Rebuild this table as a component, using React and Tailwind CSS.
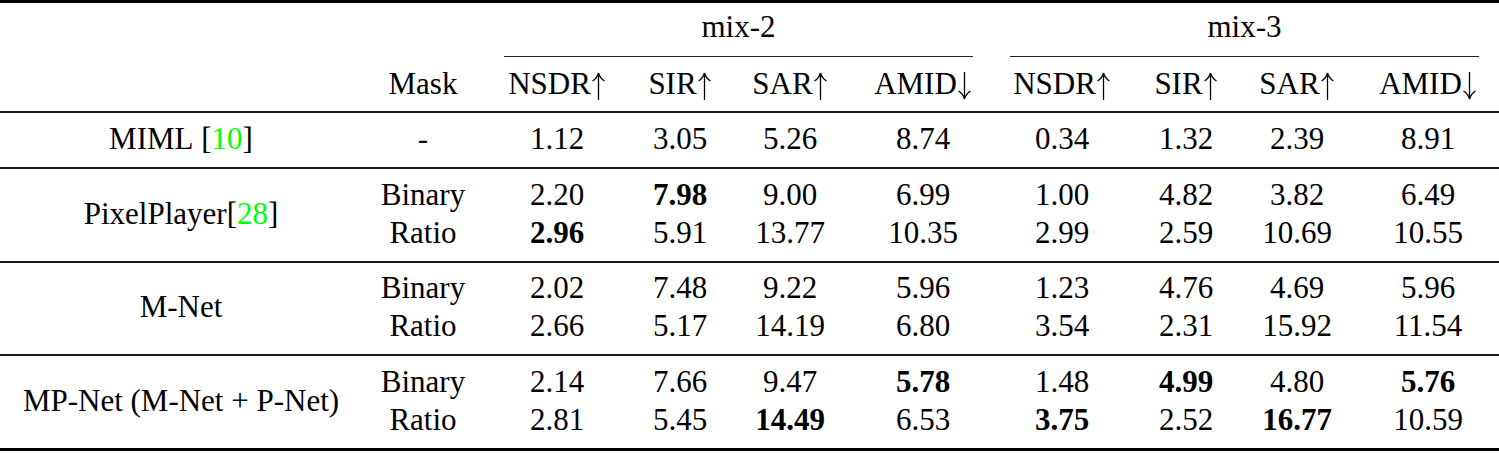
const cols = 'grid grid-cols-[362px_122px_146px_100px_120px_146px_132px_116px_106px_149px]'

const rows = [
  { name: 'MIML', cite: '10', space: true, lines: [['-', '1.12', '3.05', '5.26', '8.74', '0.34', '1.32', '2.39', '8.91']] },
  {
    name: 'PixelPlayer',
    cite: '28',
    lines: [
      ['Binary', '2.20', '*7.98', '9.00', '6.99', '1.00', '4.82', '3.82', '6.49'],
      ['Ratio', '*2.96', '5.91', '13.77', '10.35', '2.99', '2.59', '10.69', '10.55'],
    ],
  },
  {
    name: 'M-Net',
    lines: [
      ['Binary', '2.02', '7.48', '9.22', '5.96', '1.23', '4.76', '4.69', '5.96'],
      ['Ratio', '2.66', '5.17', '14.19', '6.80', '3.54', '2.31', '15.92', '11.54'],
    ],
  },
  {
    name: 'MP-Net (M-Net + P-Net)',
    lines: [
      ['Binary', '2.14', '7.66', '9.47', '*5.78', '1.48', '*4.99', '4.80', '*5.76'],
      ['Ratio', '2.81', '5.45', '*14.49', '6.53', '*3.75', '2.52', '*16.77', '10.59'],
    ],
  },
]

function Cell({ value, last }) {
  const bold = value.startsWith('*')
  return (
    <div className={`text-center ${bold ? 'font-bold' : ''} ${last ? 'pl-[7px]' : ''}`}>
      {bold ? value.slice(1) : value}
    </div>
  )
}

// thin math-style arrow, like \uparrow / \downarrow
function Arrow({ down }) {
  return (
    <svg
      width="15"
      height="28"
      viewBox="0 0 15 28"
      className={`inline-block align-[-6px] ${down ? 'rotate-180' : ''}`}
      fill="none"
      stroke="black"
      strokeWidth="1.3"
    >
      <path d="M7.5 1.5 V28" />
      <path d="M7.5 1 C6.5 4.5 4 7.5 1.5 9" />
      <path d="M7.5 1 C8.5 4.5 11 7.5 13.5 9" />
    </svg>
  )
}

const heads = [
  ['NSDR', false],
  ['SIR', false],
  ['SAR', false],
  ['AMID', true],
]

export default function App() {
  return (
    <div className="w-[1499px] h-[453px] bg-white text-black text-[31px] leading-[38px] font-['Liberation_Serif','Times_New_Roman',serif]">
      <div className="border-t-[3px] border-black">
        {/* header */}
        <div className={`${cols} pt-[4.5px]`}>
          <div className="col-start-3 col-span-4 ml-[20px] mr-[23px] pb-[10.5px] border-b border-[#222] text-center">mix-2</div>
          <div className="col-span-4 ml-[14px] mr-[20px] pb-[10.5px] border-b border-[#222] text-center">mix-3</div>
        </div>
        <div className={`${cols} pt-[7.5px] pb-[8.5px]`}>
          <div />
          <div className="text-center">Mask</div>
          {[...heads, ...heads].map(([h, down], i) => (
            <div key={i} className={`text-center whitespace-nowrap ${i === 7 ? 'pl-[7px]' : ''}`}>
              {h}
              <Arrow down={down} />
            </div>
          ))}
        </div>

        {rows.map((r, ri) => (
          <div
            key={r.name}
            className={`${cols} border-t-2 border-[#1a1a1a] pt-[6.5px] ${ri === 0 ? 'pb-[9.5px]' : 'pb-[9px]'}`}
          >
            <div className="flex items-center justify-center" style={{ gridRow: `1 / span ${r.lines.length}`, gridColumn: 1 }}>
              {r.name}
              {r.cite && (
                <>
                  {r.space ? '\u00a0' : ''}[<span className="text-[#00ff00]">{r.cite}</span>]
                </>
              )}
            </div>
            {r.lines.map((line, li) =>
              line.map((v, ci) => (
                <div key={`${li}-${ci}`} style={{ gridRow: li + 1, gridColumn: ci + 2 }}>
                  <Cell value={v} last={ci === 8} />
                </div>
              ))
            )}
          </div>
        ))}
        <div className="border-t-[3px] border-black" />
      </div>
    </div>
  )
}
